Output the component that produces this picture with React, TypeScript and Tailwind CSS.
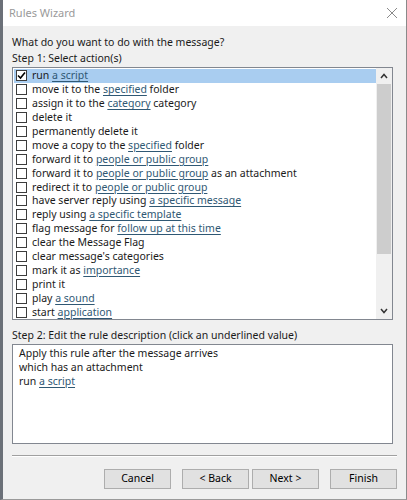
import React from 'react';

type Part = string | { link: string };

const actions: Part[][] = [
  ['run ', { link: 'a script' }],
  ['move it to the ', { link: 'specified' }, ' folder'],
  ['assign it to the ', { link: 'category' }, ' category'],
  ['delete it'],
  ['permanently delete it'],
  ['move a copy to the ', { link: 'specified' }, ' folder'],
  ['forward it to ', { link: 'people or public group' }],
  ['forward it to ', { link: 'people or public group' }, ' as an attachment'],
  ['redirect it to ', { link: 'people or public group' }],
  ['have server reply using ', { link: 'a specific message' }],
  ['reply using ', { link: 'a specific template' }],
  ['flag message for ', { link: 'follow up at this time' }],
  ['clear the Message Flag'],
  ["clear message's categories"],
  ['mark it as ', { link: 'importance' }],
  ['print it'],
  ['play ', { link: 'a sound' }],
  ['start ', { link: 'application' }],
];

function Text({ parts }: { parts: Part[] }) {
  return (
    <>
      {parts.map((p, i) =>
        typeof p === 'string' ? (
          <span key={i}>{p}</span>
        ) : (
          <span key={i} className="text-[#2f5874] underline underline-offset-2">
            {p.link}
          </span>
        )
      )}
    </>
  );
}

function Checkbox({ checked }: { checked?: boolean }) {
  return (
    <div className="w-[11px] h-[11px] border border-[#3c3c3c] bg-white flex items-center justify-center shrink-0">
      {checked && (
        <svg width="9" height="9" viewBox="0 0 9 9">
          <path d="M1 4.5 L3.5 7 L8 1.5" fill="none" stroke="#000" strokeWidth="1.6" />
        </svg>
      )}
    </div>
  );
}

function Button({ label }: { label: string }) {
  return (
    <button className="h-[20px] w-[67px] bg-[#e1e1e1] border border-[#adadad] text-[10.5px] text-black">
      {label}
    </button>
  );
}

export default function App() {
  return (
    <div
      className="w-[407px] h-[500px] bg-[#f0f0f0] flex flex-col border-l-[3px] border-l-[#6b7078] border-r border-r-[#8a8a8a] border-b border-b-[#9a9a9a] text-[10.5px] text-[#1a1a1a] overflow-hidden"
      style={{ fontFamily: '"Noto Sans", "DejaVu Sans", sans-serif' }}
    >
      {/* Title bar */}
      <div className="h-[26px] bg-white flex items-center justify-between pl-[6px] pr-[8px] shrink-0">
        <span className="text-[11px] text-[#9a9a9a]">Rules Wizard</span>
        <svg width="12" height="12" viewBox="0 0 12 12">
          <path d="M1 1 L11 11 M11 1 L1 11" stroke="#8a8a8a" strokeWidth="1" />
        </svg>
      </div>

      <div className="flex flex-col pl-[9px] pr-[10px] pt-[8px]">
        <div className="leading-[16px]">What do you want to do with the message?</div>
        <div className="leading-[16px]">Step 1: Select action(s)</div>

        {/* Action list */}
        <div className="mt-[1px] h-[253px] w-[381px] border border-[#828790] bg-white flex">
          <div className="flex-1 flex flex-col pt-[1px] pl-[1px]">
            {actions.map((parts, i) => (
              <div
                key={i}
                className={`h-[13.9px] flex items-center gap-[5px] pl-[2px] whitespace-nowrap leading-[13px] ${
                  i === 0 ? 'bg-[#a9cdf0]' : ''
                }`}
              >
                <Checkbox checked={i === 0} />
                <span>
                  <Text parts={parts} />
                </span>
              </div>
            ))}
          </div>
          {/* Scrollbar */}
          <div className="w-[16px] bg-[#f0f0f0] flex flex-col items-center">
            <div className="h-[16px] flex items-center justify-center">
              <svg width="8" height="6" viewBox="0 0 8 6">
                <path d="M1 5 L4 1.5 L7 5" fill="none" stroke="#333" strokeWidth="1.5" />
              </svg>
            </div>
            <div className="w-[14px] h-[170px] bg-[#cdcdcd]" />
            <div className="flex-1" />
            <div className="h-[16px] flex items-center justify-center">
              <svg width="8" height="6" viewBox="0 0 8 6">
                <path d="M1 1 L4 4.5 L7 1" fill="none" stroke="#333" strokeWidth="1.5" />
              </svg>
            </div>
          </div>
        </div>

        <div className="mt-[7px] leading-[16px]">Step 2: Edit the rule description (click an underlined value)</div>

        {/* Description */}
        <div className="mt-[1px] h-[100px] w-[381px] border border-[#828790] bg-white pl-[6px] pt-[1px] leading-[14px]">
          <div>Apply this rule after the message arrives</div>
          <div>which has an attachment</div>
          <div>
            <Text parts={['run ', { link: 'a script' }]} />
          </div>
        </div>

        <div className="mt-[11px] h-[2px] w-[385px] border-t border-t-[#a0a0a0] border-b border-b-white" />

        <div className="mt-[12px] flex justify-end w-[385px]">
          <Button label="Cancel" />
          <div className="w-[11px]" />
          <Button label="< Back" />
          <div className="w-[3px]" />
          <Button label="Next >" />
          <div className="w-[11px]" />
          <Button label="Finish" />
        </div>
      </div>
    </div>
  );
}
